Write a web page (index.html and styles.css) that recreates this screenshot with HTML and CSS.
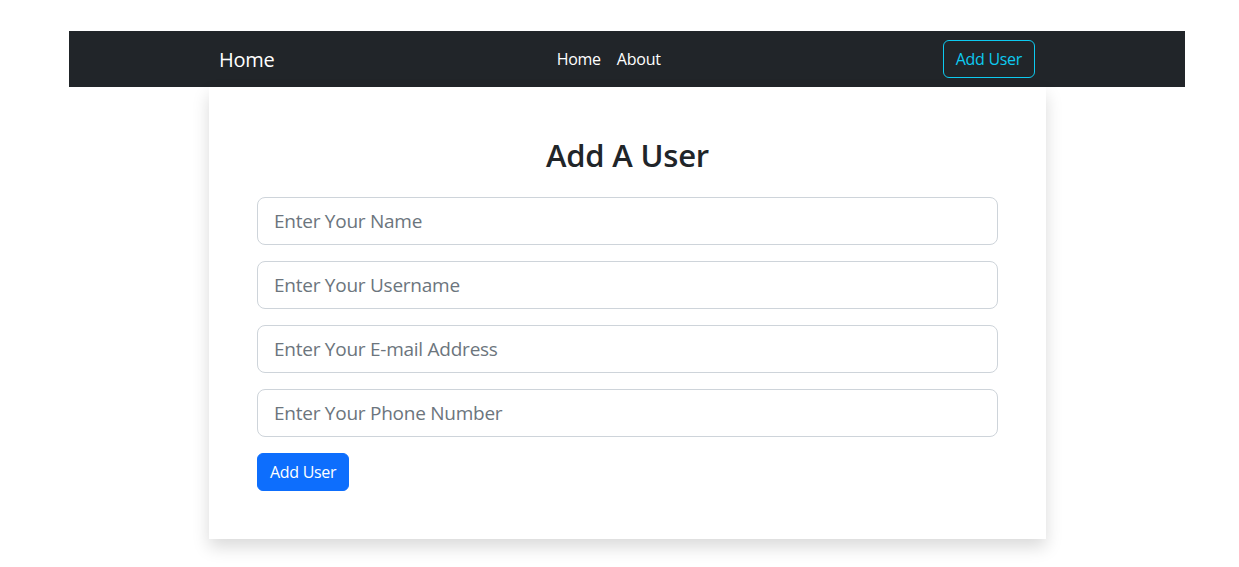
FILE: index.html
```html
<!DOCTYPE html>
<html lang="en">
<head>
<meta charset="utf-8">
<title>Add A User</title>
<link rel="stylesheet" href="styles.css">
</head>
<body>
<div class="page">
  <nav class="navbar">
    <div class="nav-container">
      <a class="brand" href="#">Home</a>
      <ul class="nav-links">
        <li><a href="#">Home</a></li>
        <li><a href="#">About</a></li>
      </ul>
      <a class="btn btn-outline-info" href="#">Add User</a>
    </div>
  </nav>
  <main class="container">
    <div class="card">
      <h2 class="title">Add A User</h2>
      <form class="form">
        <input class="field" type="text" placeholder="Enter Your Name">
        <input class="field" type="text" placeholder="Enter Your Username">
        <input class="field" type="email" placeholder="Enter Your E-mail Address">
        <input class="field" type="text" placeholder="Enter Your Phone Number">
        <div><button class="btn btn-primary" type="button">Add User</button></div>
      </form>
    </div>
  </main>
</div>
</body>
</html>
```
FILE: styles.css
```css
* { box-sizing: border-box; }
html, body { margin: 0; padding: 0; background: #fff; }
body {
  font-family: "Open Sans", "Noto Sans", sans-serif;
  color: #212529;
  font-size: 16px;
  line-height: 1.5;
  letter-spacing: -0.25px;
}
.page {
  padding: 31px 0 28px 69px;
  width: 1185px;
}
.navbar {
  background: #212529;
  height: 56px;
  display: flex;
  align-items: center;
}
.nav-container {
  width: 840px;
  margin-left: 138px;
  padding: 0 12px;
  display: flex;
  align-items: center;
  justify-content: space-between;
}
.brand {
  color: #fff;
  text-decoration: none;
  font-size: 20px;
  line-height: 30px;
  padding-top: 2px;
}
.nav-links {
  list-style: none;
  display: flex;
  margin: 0;
  padding: 0;
}
.nav-links a {
  display: block;
  color: #fff;
  text-decoration: none;
  padding: 8px 8px;
  font-size: 16px;
}
.btn {
  display: inline-block;
  font-family: inherit;
  font-size: 16px;
  line-height: 24px;
  letter-spacing: -0.3px;
  padding: 6px 12px;
  border-radius: 6px;
  border: 1px solid transparent;
  text-decoration: none;
  cursor: pointer;
}
.btn-outline-info {
  color: #0dcaf0;
  border-color: #0dcaf0;
  background: transparent;
}
.btn-primary {
  color: #fff;
  background: #0d6efd;
  border-color: #0d6efd;
}
.container {
  width: 837px;
  margin-left: 140px;
}
.card {
  background: #fff;
  box-shadow: 0 8px 16px rgba(0,0,0,.15);
  padding: 48px;
}
.title {
  margin: 0 0 24px;
  padding-top: 2px;
  text-align: center;
  font-size: 31px;
  font-weight: 600;
  line-height: 36px;
  letter-spacing: -0.2px;
}
.form {
  display: flex;
  flex-direction: column;
  gap: 16px;
}
.field {
  display: block;
  width: 100%;
  height: 48px;
  padding: 8px 16px;
  font-family: inherit;
  font-size: 19px;
  letter-spacing: -0.25px;
  color: #212529;
  border: 1px solid #ced4da;
  border-radius: 8px;
  background: #fff;
}
.field::placeholder { color: #6c757d; opacity: 1; }
```
